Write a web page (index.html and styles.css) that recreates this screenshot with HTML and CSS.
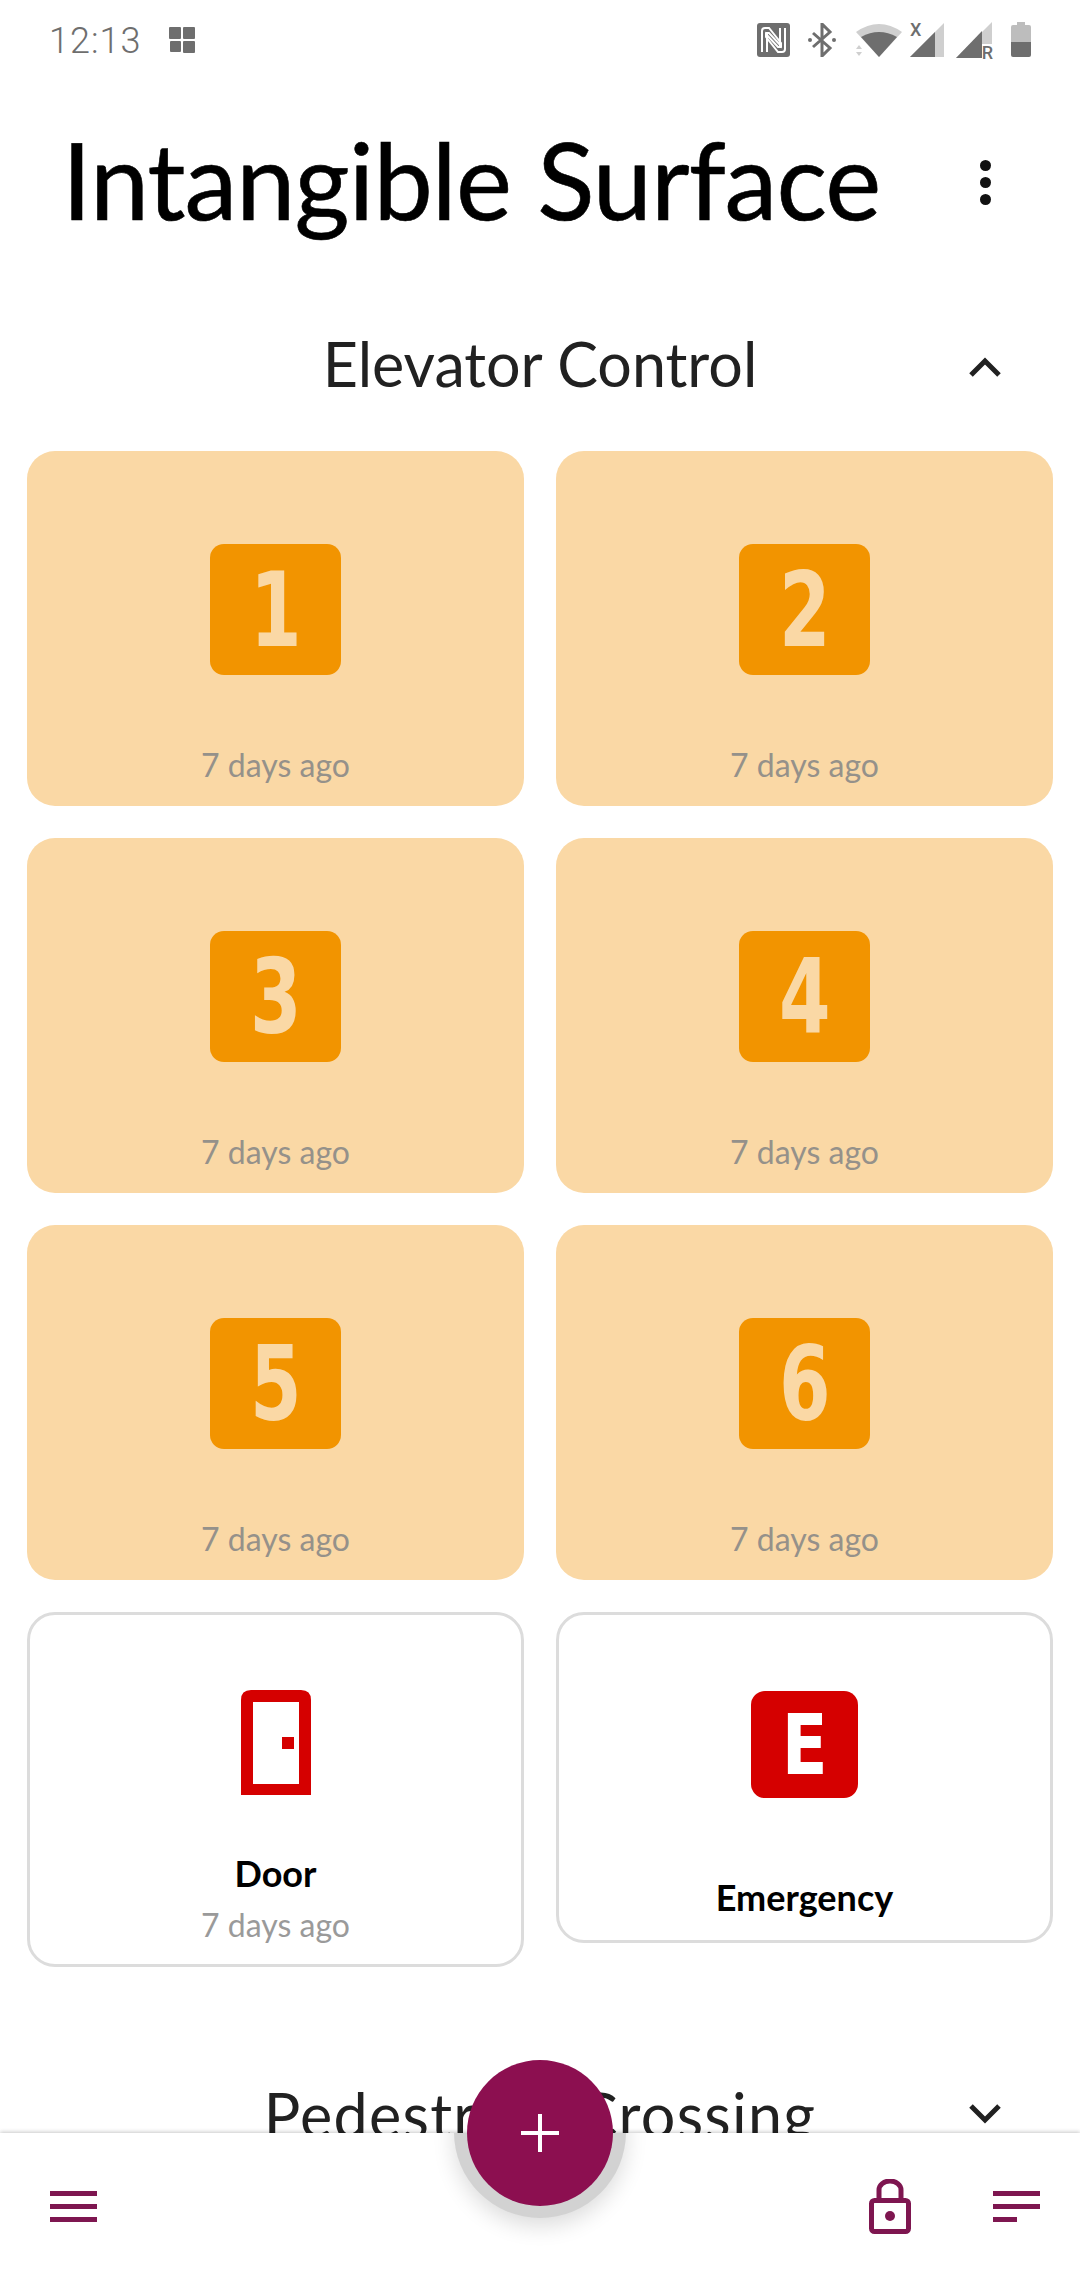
FILE: index.html
```html
<!DOCTYPE html>
<html lang="en">
<head>
  <meta charset="UTF-8" />
  <meta name="viewport" content="width=device-width, initial-scale=1.0"/>
  <title>Intangible Surface</title>
  <link rel="stylesheet" href="styles.css">
</head>
<body>
<div class="app">

  <main class="content">
    <div class="status">
      <span class="time">12:13</span>
      <svg class="status-grid" width="26" height="26" viewBox="0 0 26 26">
        <rect x="0" y="0" width="12" height="12" rx="1"/>
        <rect x="14" y="0" width="12" height="12" rx="1"/>
        <rect x="1" y="14" width="11" height="11" rx="1"/>
        <rect x="14" y="14" width="12" height="12" rx="1"/>
      </svg>
      <span class="status-space"></span>

      <!-- nfc -->
      <svg class="ic-nfc" width="33" height="34" viewBox="0 0 33 34">
        <rect width="33" height="34" rx="3" fill="#6e6e6e"/>
        <path d="M5 29V8q0-3 3-3h4l12 15v3L12 10H10v19" fill="none" stroke="#fff" stroke-width="2"/>
        <path d="M28 5v21q0 3-3 3h-4L9 14v-3l12 13h2V5" fill="none" stroke="#fff" stroke-width="2"/>
      </svg>
      <!-- bluetooth -->
      <svg class="ic-bt" width="28" height="34" viewBox="0 0 28 34">
        <path d="M5 10l17 15-8 8V1l8 8L5 24" fill="none" stroke="#6e6e6e" stroke-width="3"/>
        <circle cx="2" cy="17" r="2" fill="#6e6e6e"/>
        <circle cx="26" cy="17" r="2" fill="#6e6e6e"/>
      </svg>
      <!-- wifi -->
      <svg class="ic-wifi" width="46" height="33" viewBox="0 0 46 33">
        <path d="M0 8Q23-8 46 8L23 33z" fill="#cfcfcf"/>
        <path d="M5 13Q23 3 41 13L23 33z" fill="#6e6e6e"/>
        <path d="M0 25l3-4 3 4zM0 28l3 4 3-4z" fill="#cfcfcf"/>
      </svg>
      <!-- signal, sim 1 -->
      <span class="signal">
        <svg width="34" height="34" viewBox="0 0 34 34">
          <path d="M34 0V34H0z" fill="#cfcfcf"/>
          <path d="M25 9V34H0z" fill="#6e6e6e"/>
        </svg>
        <span class="signal-tag tag-x">X</span>
      </span>
      <!-- signal, sim 2 -->
      <span class="signal signal-r">
        <svg width="36" height="36" viewBox="0 0 36 36">
          <path d="M36 0V22H25V36H0z" fill="#cfcfcf"/>
          <path d="M26 9V36H0z" fill="#6e6e6e"/>
        </svg>
        <span class="signal-tag tag-r">R</span>
      </span>
      <!-- battery -->
      <svg class="ic-battery" width="20" height="35" viewBox="0 0 20 35">
        <path d="M6 0h8v3h4q2 0 2 2v15H0V5q0-2 2-2h4z" fill="#bdbdbd"/>
        <path d="M0 20h20v13q0 2-2 2H2q-2 0-2-2z" fill="#6e6e6e"/>
      </svg>
    </div>

    <header class="app-head">
      <h1>Intangible Surface</h1>
      <div class="dots"><i></i><i></i><i></i></div>
    </header>

    <section class="group">
      <div class="group-head">
        <h2>Elevator Control</h2>
        <svg class="chevron" width="32" height="20" viewBox="0 0 32 20"><path d="M2 18L16 4l14 14" fill="none" stroke="#212121" stroke-width="5"/></svg>
      </div>

      <div class="cards">
        <div class="card amber">
          <div class="key"><span>1</span></div>
          <div class="ago">7 days ago</div>
        </div>
        <div class="card amber">
          <div class="key"><span>2</span></div>
          <div class="ago">7 days ago</div>
        </div>
        <div class="card amber">
          <div class="key"><span>3</span></div>
          <div class="ago">7 days ago</div>
        </div>
        <div class="card amber">
          <div class="key"><span>4</span></div>
          <div class="ago">7 days ago</div>
        </div>
        <div class="card amber">
          <div class="key"><span>5</span></div>
          <div class="ago">7 days ago</div>
        </div>
        <div class="card amber">
          <div class="key"><span>6</span></div>
          <div class="ago">7 days ago</div>
        </div>

        <div class="card plain card-door">
          <svg class="door" width="70" height="105" viewBox="0 0 70 105">
            <path d="M0 105V10Q0 0 10 0H60Q70 0 70 10V105zM12 94H58V12H12z" fill="#d50000" fill-rule="evenodd"/>
            <rect x="41" y="47" width="12" height="12" fill="#d50000"/>
          </svg>
          <div class="name">Door</div>
          <div class="ago">7 days ago</div>
        </div>
        <div class="card plain card-emergency">
          <div class="key key-red"><span>E</span></div>
          <div class="name">Emergency</div>
        </div>
      </div>
    </section>

    <section class="group group-next">
      <div class="group-head">
        <h2>Pedestrian Crossing</h2>
        <svg class="chevron" width="32" height="20" viewBox="0 0 32 20"><path d="M2 2l14 14L30 2" fill="none" stroke="#212121" stroke-width="5"/></svg>
      </div>
    </section>
  </main>

  <div class="bottom">
    <nav class="bar">
      <div class="cradle"></div>
      <svg width="47" height="31" viewBox="0 0 47 31">
        <rect width="47" height="5" y="0"/><rect width="47" height="5" y="13"/><rect width="47" height="5" y="26"/>
      </svg>
      <span class="bar-space"></span>
      <svg class="lock" width="42" height="55" viewBox="0 0 42 55">
        <path d="M10 20V11a11 9 0 0 1 22 0v9" fill="none" stroke="#7e1650" stroke-width="5"/>
        <rect x="2.500" y="21.500" width="37" height="31" rx="3" fill="none" stroke="#7e1650" stroke-width="5"/>
        <circle cx="21" cy="37" r="5"/>
      </svg>
      <svg width="47" height="31" viewBox="0 0 47 31">
        <rect width="47" height="5" y="0"/><rect width="47" height="5" y="13"/><rect width="24" height="5" y="26"/>
      </svg>
    </nav>
    <button class="fab" type="button">
      <svg width="38" height="38" viewBox="0 0 38 38"><path d="M17 0h4v17h17v4H21v17h-4V21H0v-4h17z" fill="#fff"/></svg>
    </button>
  </div>

</div>
</body>
</html>
```

FILE: styles.css
```css
* {
  box-sizing: border-box;
}

body {
  margin: 0;
  background: #fff;
  font-family: Lato, "Noto Sans", sans-serif;
}

.app {
  width: 1080px;
  height: 2280px;
  display: flex;
  flex-direction: column;
  overflow: hidden;
}

.content {
  flex: 1;
  min-height: 0;
  overflow: hidden;
}

/* status bar */
.status {
  height: 80px;
  padding: 22px 49px 0 49px;
  display: flex;
  align-items: flex-start;
}

.time {
  font-family: Roboto, sans-serif;
  font-weight: 300;
  font-size: 36px;
  line-height: 38px;
  letter-spacing: 1px;
  color: #6e6e6e;
}

.status-grid {
  margin: 5px 0 0 28px;
  fill: #6e6e6e;
}

.status-space {
  flex: 1;
}

.ic-nfc {
  margin-top: 1px;
}

.ic-bt {
  margin: 1px 0 0 18px;
}

.ic-wifi {
  margin: 2px 0 0 20px;
}

.signal {
  position: relative;
  margin: 1px 0 0 8px;
  height: 34px;
}

.signal-r {
  margin: 0 0 0 12px;
}

.ic-battery {
  margin-left: 19px;
}

.signal-tag {
  position: absolute;
  font-family: Roboto, sans-serif;
  font-weight: 500;
  font-size: 18px;
  line-height: 16px;
  color: #6e6e6e;
}

.tag-x {
  left: 0;
  top: -1px;
}

.tag-r {
  right: -1px;
  top: 23px;
}

/* title row */
.app-head {
  height: 190px;
  padding: 0 75px 0 62px;
  display: flex;
  align-items: center;
  justify-content: space-between;
  margin-top: 7px;
}

h1 {
  margin: -6px 0 0;
  font-size: 106px;
  font-weight: 400;
  line-height: 1;
  letter-spacing: -0.9px;
  -webkit-text-stroke: 0.6px #000;
  color: #000;
  white-space: nowrap;
}

.dots {
  width: 40px;
  display: flex;
  flex-direction: column;
  align-items: center;
  gap: 6px;
}

.dots i {
  width: 11px;
  height: 11px;
  border-radius: 50%;
  background: #111;
}

/* sections */
.group-head {
  position: relative;
  height: 84px;
  margin-top: 48px;
  display: flex;
  align-items: center;
  justify-content: center;
}

h2 {
  margin: -8px 0 0;
  font-size: 61px;
  font-weight: 400;
  color: #212121;
  white-space: nowrap;
}

.chevron {
  position: absolute;
  left: 969px;
  top: 32px;
}

.cards {
  margin-top: 42px;
  padding: 0 27px;
  display: grid;
  grid-template-columns: 497px 497px;
  gap: 32px;
  align-items: start;
}

.group-next .group-head {
  margin-top: 105px;
}

.group-next h2 {
  margin-top: 0;
  letter-spacing: 1.3px;
}

/* cards */
.card {
  border-radius: 28px;
  display: flex;
  flex-direction: column;
  align-items: center;
  text-align: center;
}

.amber {
  height: 355px;
  padding: 93px 0 21px;
  background: #fad8a5;
}

.plain {
  border: 3px solid #dcdcdc;
  background: #fff;
}

.card-door {
  height: 355px;
  padding: 75px 0 19px;
}

.card-emergency {
  height: 331px;
  padding: 76px 0 21px;
}

.key {
  width: 131px;
  height: 131px;
  border-radius: 14px;
  background: #f29400;
  color: #fad8a5;
  display: flex;
  align-items: center;
  justify-content: center;
}

.key span {
  font-family: "DejaVu Sans", sans-serif;
  font-weight: 700;
  font-size: 103px;
  line-height: 1;
  padding-top: 1px;
  transform: scaleX(0.72);
}

.key-red {
  width: 107px;
  height: 107px;
  background: #d50000;
  color: #fff;
}

.key-red span {
  font-size: 84px;
  padding-top: 0;
  transform: scaleX(0.8);
}

.ago {
  margin-top: auto;
  font-size: 32px;
  line-height: 40px;
  color: #95918a;
}

.plain .ago {
  margin-top: 10px;
  color: #9a9a9a;
}

.name {
  margin-top: auto;
  font-size: 36px;
  font-weight: 700;
  line-height: 44px;
  color: #000;
}

/* bottom bar and add button */
.bottom {
  position: relative;
  flex: none;
  height: 147px;
}

.bar {
  position: relative;
  height: 100%;
  padding: 0 40px 0 50px;
  display: flex;
  align-items: center;
  gap: 82px;
  background: #fff;
  box-shadow: 0 -1px 4px rgba(0, 0, 0, 0.22);
  overflow: hidden;
  fill: #7e1650;
}

.bar-space {
  flex: 1;
}

.cradle {
  position: absolute;
  left: 454px;
  top: -87px;
  width: 172px;
  height: 172px;
  border-radius: 50%;
  background: #d2d2d2;
  box-shadow: 0 8px 22px rgba(0, 0, 0, 0.14);
}

.fab {
  position: absolute;
  left: 467px;
  top: -73px;
  width: 146px;
  height: 146px;
  padding: 0;
  border: none;
  border-radius: 50%;
  background: #8c0f50;
  display: flex;
  align-items: center;
  justify-content: center;
}
```
